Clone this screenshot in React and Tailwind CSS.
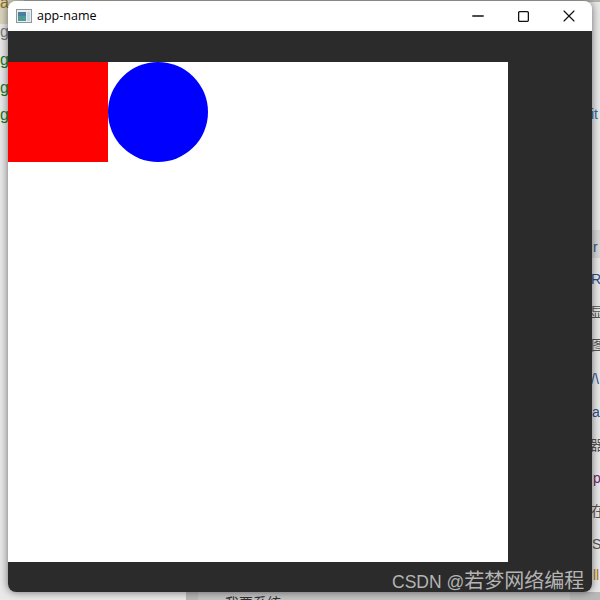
import { Minus, Square, X } from 'lucide-react';

const leftBits = [
  { text: 'a', cls: 'top-[-7px] text-[#8a6d1a]' },
  { text: 'g', cls: 'top-[22px] text-[#7a7a7a]' },
  { text: 'g', cls: 'top-[50px] text-[#1f7a1f]' },
  { text: 'g', cls: 'top-[78px] text-[#1f7a1f]' },
  { text: 'g', cls: 'top-[105px] text-[#1f7a1f]' },
];

const rightBits = [
  { text: 'it', cls: 'top-[104px] left-[591px] text-[#2a6fa8]' },
  { text: 'r', cls: 'top-[237px] left-[593px] text-[#2a5f88]' },
  { text: 'Ra', cls: 'top-[269px] left-[591px] text-[#2a4f88]' },
  { text: '显', cls: 'top-[302px] left-[590px] text-[#555555]' },
  { text: '图', cls: 'top-[335px] left-[591px] text-[#555555]' },
  { text: '/\\', cls: 'top-[369px] left-[591px] text-[#2a4f88]' },
  { text: 'a', cls: 'top-[402px] left-[592px] text-[#2a4f88]' },
  { text: '器', cls: 'top-[435px] left-[590px] text-[#555555]' },
  { text: 'p', cls: 'top-[468px] left-[593px] text-[#6a2a6a]' },
  { text: '在', cls: 'top-[501px] left-[591px] text-[#555555]' },
  { text: 'S', cls: 'top-[534px] left-[592px] text-[#555555]' },
  { text: 'll', cls: 'top-[565px] left-[593px] text-[#b07a20]' },
];

function AppIcon() {
  return (
    <svg width="16" height="14" viewBox="0 0 16 14" className="shrink-0">
      <rect x="0.5" y="0.5" width="15" height="13" fill="#e8eef0" stroke="#8d979c" />
      <rect x="2" y="3" width="8" height="9" fill="#4f9a94" />
      <rect x="2" y="3" width="8" height="4" fill="#4d7f9c" />
      <rect x="11" y="3" width="3" height="9" fill="#c9dbe2" />
    </svg>
  );
}

export default function App() {
  return (
    <div className="relative w-[600px] h-[600px] overflow-hidden bg-[#e9e9e9] font-['Liberation_Sans','Noto_Sans_CJK_SC',sans-serif]">
      {/* stuff behind the window */}
      <div className="absolute left-0 top-0 w-[600px] h-[2px] bg-[#b5b5ad]" />
      <div className="absolute left-0 top-0 w-[24px] h-[24px] bg-[#d9d4bd]" />
      <div className="absolute left-[590px] top-[230px] w-[10px] h-[28px] bg-[#d8d8d8]" />
      <div className="absolute left-[186px] top-[592px] w-[414px] h-[8px] bg-[#b9b9b9]" />
      <div className="absolute left-[198px] top-[592px] w-[372px] h-[8px] bg-[#c4c4c4]" />
      <div className="absolute left-[225px] top-[595px] text-[14px] leading-[16px] text-[#333333]">我要系统</div>
      {leftBits.map((b, i) => (
        <span key={i} className={`absolute left-0 text-[16px] leading-[20px] ${b.cls}`}>
          {b.text}
        </span>
      ))}
      {rightBits.map((b, i) => (
        <span key={i} className={`absolute text-[14px] leading-[20px] ${b.cls}`}>
          {b.text}
        </span>
      ))}

      {/* the window */}
      <div className="absolute left-[8px] top-[1px] w-[584px] h-[591px] flex flex-col rounded-lg overflow-hidden shadow-[0_0_8px_rgba(0,0,0,0.55)]">
        <div className="h-[30px] shrink-0 bg-white flex items-center pl-[8px]">
          <AppIcon />
          <span className="ml-[5px] text-[12.5px] text-black font-['Open_Sans','Liberation_Sans',sans-serif]">app-name</span>
          <div className="ml-auto flex items-center">
            <div className="w-[46px] h-[30px] flex items-center justify-center pl-[1px]">
              <Minus size={18} strokeWidth={1.7} color="#111111" />
            </div>
            <div className="w-[46px] h-[30px] flex items-center justify-center">
              <Square size={13} strokeWidth={2.4} color="#111111" />
            </div>
            <div className="w-[46px] h-[30px] flex items-center justify-center">
              <X size={20} strokeWidth={1.4} color="#111111" />
            </div>
          </div>
        </div>
        <div className="flex-1 bg-[#2b2b2b] pt-[31px]">
          <div className="w-[500px] h-[500px] bg-white flex items-start">
            <div className="w-[100px] h-[100px] bg-[#ff0000]" />
            <div className="w-[100px] h-[100px] rounded-full bg-[#0000ff]" />
          </div>
        </div>
      </div>

      {/* watermark */}
      <div className="absolute left-[392px] top-[568px] text-[20px] leading-[26px] whitespace-nowrap text-[#b4b4b4]">
        <span className="text-[17.5px]">CSDN @</span>若梦网络编程
      </div>
    </div>
  );
}
